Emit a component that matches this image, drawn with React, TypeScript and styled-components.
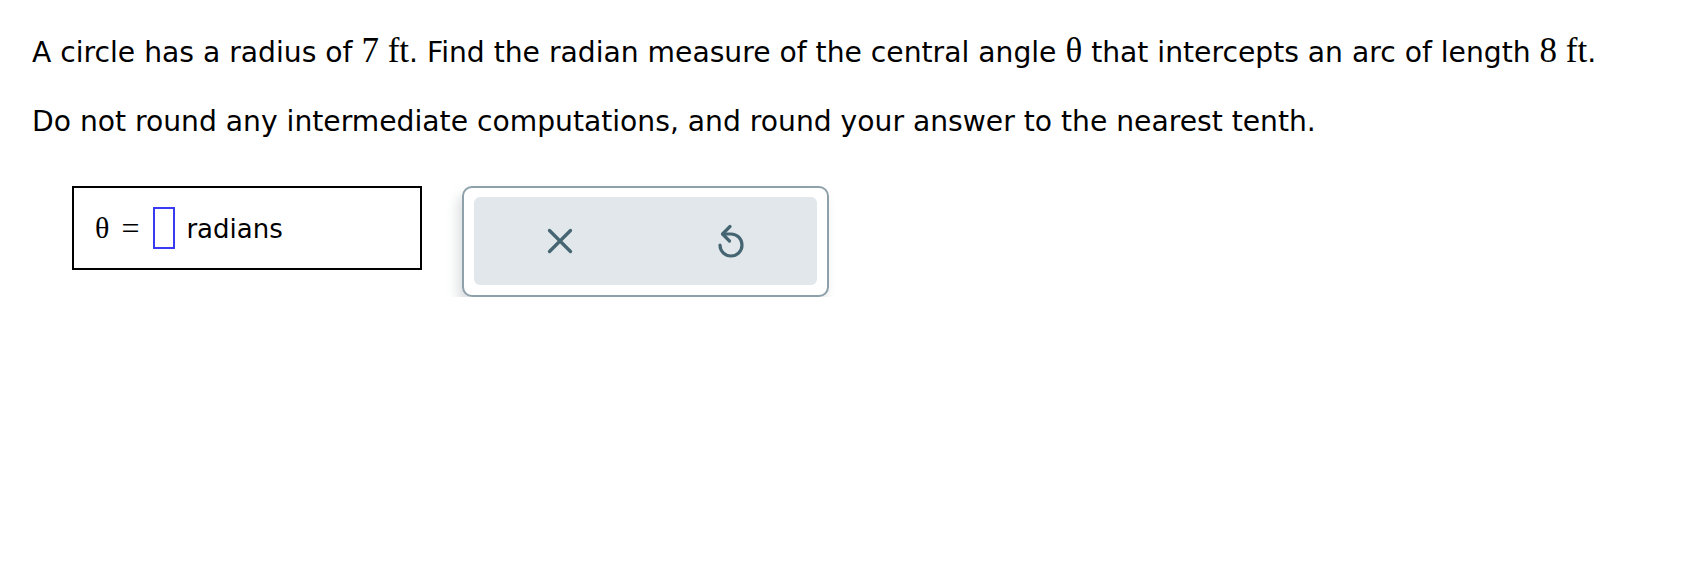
import React from 'react'
import styled, { createGlobalStyle } from 'styled-components'

const GlobalStyle = createGlobalStyle`
  body {
    margin: 0;
    background: #ffffff;
    font-family: "DejaVu Sans", Verdana, sans-serif;
    color: #000000;
  }
`

const Page = styled.div`
  padding: 33px 0 0 32px;
`

const Prompt = styled.p`
  margin: 0 0 33px;
  font-size: 28.2px;
  line-height: 36px;
  white-space: nowrap;
`

const MathText = styled.span<{ size?: number }>`
  font-family: "Liberation Serif", "Times New Roman", serif;
  font-size: ${props => props.size ?? 35}px;
`

const AnswerRow = styled.div`
  display: flex;
  align-items: flex-start;
  gap: 40px;
  margin: 46px 0 0 40px;
`

const AnswerBox = styled.div`
  box-sizing: border-box;
  width: 350px;
  height: 84px;
  border: 2px solid #000000;
  display: flex;
  align-items: center;
  padding-left: 21px;
`

const Equals = styled.span`
  font-family: "Liberation Serif", "Times New Roman", serif;
  font-size: 32px;
  margin: 0 14px 0 12px;
`

const BlankInput = styled.span`
  box-sizing: border-box;
  display: inline-block;
  width: 22px;
  height: 42px;
  border: 2px solid #3a3af2;
  margin-right: 11px;
`

const Unit = styled.span`
  font-size: 26px;
  position: relative;
  top: 1px;
`

const ToolPanel = styled.div`
  box-sizing: border-box;
  width: 367px;
  height: 111px;
  border: 2px solid #8ea0aa;
  border-radius: 10px;
  padding: 9px 10px 10px;
  background: #ffffff;
  box-shadow: -4px 8px 12px rgba(70, 90, 100, 0.2);
`

const ToolTray = styled.div`
  height: 100%;
  display: flex;
  background: #e1e7ea;
  border-radius: 6px;
`

const ToolButton = styled.button`
  flex: 1;
  display: flex;
  align-items: center;
  justify-content: center;
  border: none;
  background: transparent;
  padding: 0;
  cursor: pointer;
  color: #456572;
`

const CloseIcon = () => (
  <svg width="26" height="26" viewBox="0 0 26 26" fill="none" stroke="currentColor" strokeWidth="3.3" strokeLinecap="round">
    <path d="M2.5 2.5 L23.5 23.5 M23.5 2.5 L2.5 23.5" />
  </svg>
)

const UndoIcon = () => (
  <svg width="28" height="34" viewBox="-1 -1 28 34" fill="none" stroke="currentColor" strokeWidth="3.2" strokeLinecap="round" strokeLinejoin="round">
    <path d="M2 20 A11 11 0 1 0 13 9 H5" />
    <path d="M12 1.5 L4.5 9 L11.5 16" />
  </svg>
)

const App: React.FC = () => (
  <>
    <GlobalStyle />
    <Page>
      <Prompt>
        A circle has a radius of <MathText>7 ft</MathText>. Find the radian measure of the central angle{' '}
        <MathText>θ</MathText> that intercepts an arc of length <MathText>8 ft</MathText>.
      </Prompt>
      <Prompt>Do not round any intermediate computations, and round your answer to the nearest tenth.</Prompt>
      <AnswerRow>
        <AnswerBox>
          <MathText size={30}>θ</MathText>
          <Equals>=</Equals>
          <BlankInput />
          <Unit>radians</Unit>
        </AnswerBox>
        <ToolPanel>
          <ToolTray>
            <ToolButton aria-label="Clear">
              <CloseIcon />
            </ToolButton>
            <ToolButton aria-label="Undo">
              <UndoIcon />
            </ToolButton>
          </ToolTray>
        </ToolPanel>
      </AnswerRow>
    </Page>
  </>
)

export default App
